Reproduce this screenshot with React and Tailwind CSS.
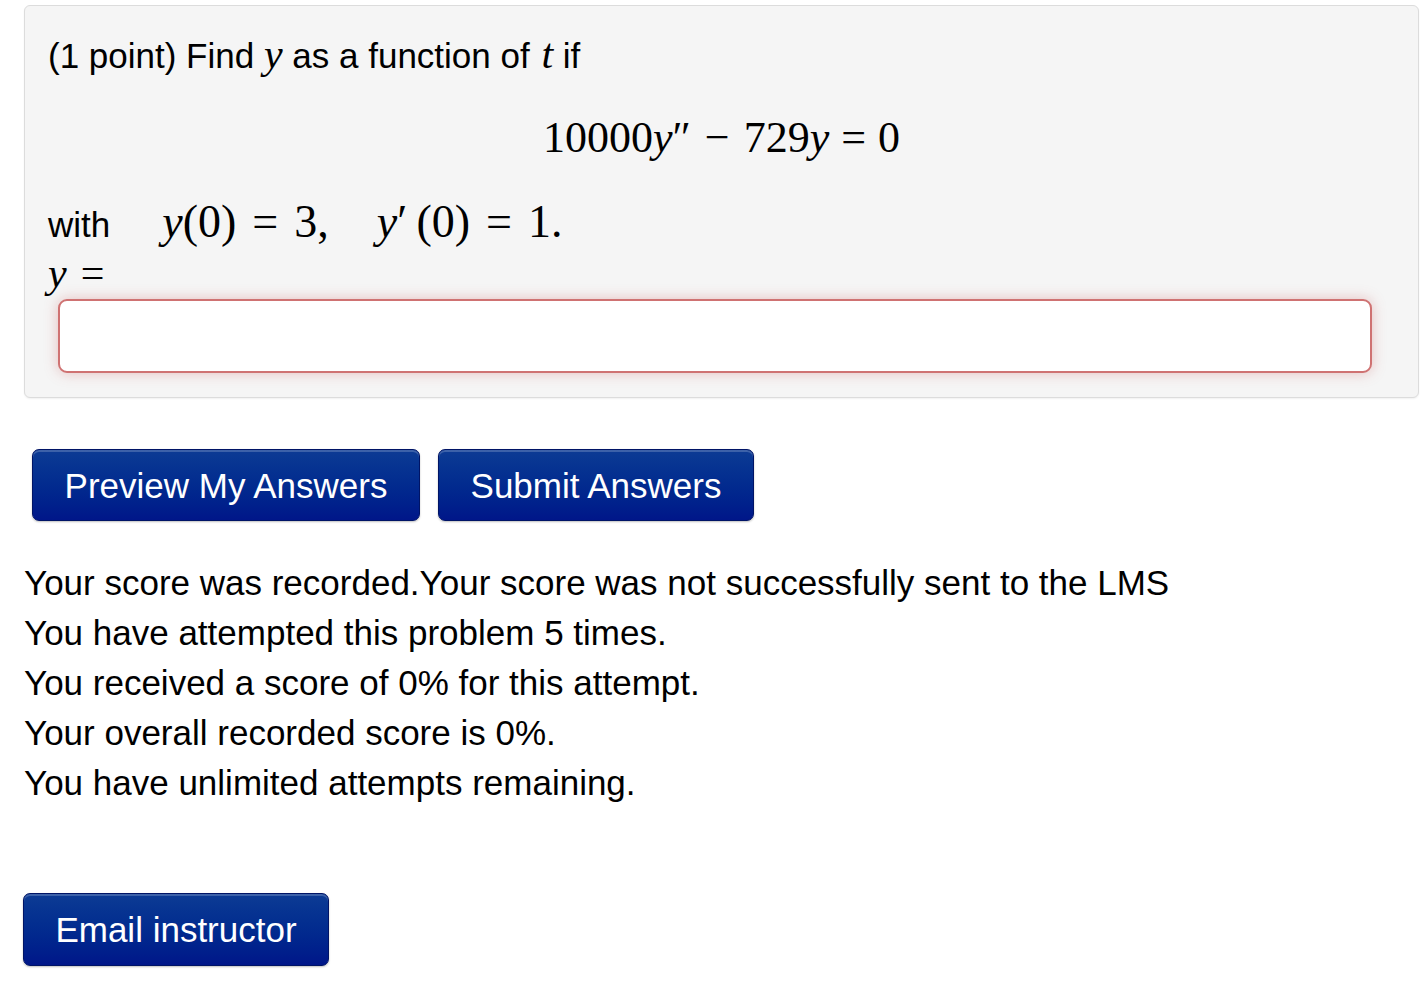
import React from 'react';

const sans = { fontFamily: '"Liberation Sans", Arial, sans-serif' };

// small helpers for the math bits
const M = ({ children, className = '' }) => (
    <span className={`font-['Liberation_Serif',serif] ${className}`}>{children}</span>
);
const I = ({ children }) => <span className="italic">{children}</span>;

const Btn = ({ children, className = '' }) => (
    <button
        className={`rounded-[7px] border border-[#001466] bg-gradient-to-b from-[#0d3b94] to-[#001689] text-white text-[35px] leading-none shadow-[0_1px_2px_rgba(0,0,0,0.25),inset_0_2px_0_rgba(255,255,255,0.2)] ${className}`}
    >
        {children}
    </button>
);

export default function App() {
    return (
        <div className="min-h-screen bg-white pl-[24px] pr-[8px] pt-[5px] text-black" style={sans}>
            {/* problem panel */}
            <div className="w-[1395px] rounded-[6px] border border-[#dcdcdc] bg-[#f5f5f5] px-[23px] pt-[27px] pb-[24px] shadow-[0_1px_2px_rgba(0,0,0,0.06)]">
                <div className="h-[42px] text-[35px] leading-[42px]">
                    (1 point) Find <M className="text-[42px] leading-none"><I>y</I></M> as a function of <M className="ml-[2px] text-[42px] leading-none"><I>t</I></M> if
                </div>

                <div className="mt-[32px] h-[60px] text-center text-[44px] leading-[60px]">
                    <M>
                        10000<I>y</I>″<span className="mx-[14px]">−</span>729<I>y</I><span className="mx-[12px]">=</span>0
                    </M>
                </div>

                <div className="mt-[30px] h-[54px] text-[35px] leading-[50px]">
                    with
                    <M className="ml-[52px] text-[46px] leading-[50px]">
                        <I>y</I>(0)<span className="mx-[16px]">=</span>3,
                        <span className="ml-[48px]"><I>y</I>′&thinsp;(0)</span>
                        <span className="mx-[16px]">=</span>1.
                    </M>
                </div>

                <div className="mt-[2px] h-[40px] text-[42px] leading-[40px]">
                    <M><I>y</I><span className="ml-[14px]">=</span></M>
                </div>

                <div className="ml-[10px] mt-[6px] h-[74px] w-[1314px] rounded-[9px] border-2 border-[#cf7272] bg-white shadow-[0_0_14px_rgba(200,90,90,0.35)]" />
            </div>

            {/* action buttons */}
            <div className="ml-[8px] mt-[51px] flex gap-[18px]">
                <Btn className="h-[72px] w-[388px]">Preview My Answers</Btn>
                <Btn className="h-[72px] w-[316px]">Submit Answers</Btn>
            </div>

            {/* status messages */}
            <div className="mt-[37px] text-[35px] leading-[50px]">
                <div>Your score was recorded.Your score was not successfully sent to the LMS</div>
                <div>You have attempted this problem 5 times.</div>
                <div>You received a score of 0% for this attempt.</div>
                <div>Your overall recorded score is 0%.</div>
                <div>You have unlimited attempts remaining.</div>
            </div>

            <div className="mt-[85px]">
                <Btn className="-ml-[1px] h-[73px] w-[306px]">Email instructor</Btn>
            </div>
        </div>
    );
}
